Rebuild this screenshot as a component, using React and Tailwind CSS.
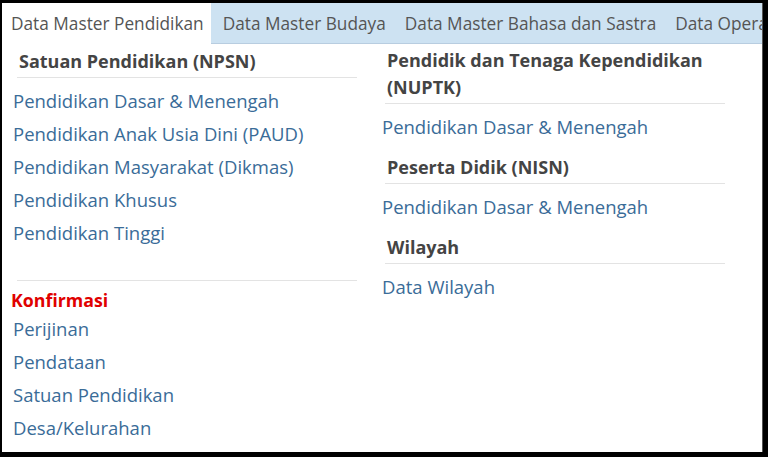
import React from "react";

const tabs = ["Data Master Pendidikan", "Data Master Budaya", "Data Master Bahasa dan Sastra", "Data Operator"];

const Heading = ({ children, className = "" }) => (
  <div className={`ml-[15px] w-[340px] border-b border-[#e3e3e3] pb-[2px] pl-[2px] text-[18px] font-bold leading-[27px] text-[#444] ${className}`}>
    {children}
  </div>
);

const Links = ({ items, className = "" }) => (
  <div className={`mt-[6px] ${className}`}>
    {items.map((t) => (
      <a key={t} href="#" className="block h-[33px] leading-[33px] text-[#3a6c98] whitespace-nowrap">
        {t}
      </a>
    ))}
  </div>
);

export default function App() {
  return (
    <div className="h-[457px] w-[768px] bg-black pb-[5px] pl-[2px] pr-[5px] pt-[3px]">
      <div
        className="flex h-full flex-col overflow-hidden border-r border-[#555] bg-white text-[18.5px]"
        style={{ fontFamily: '"Open Sans", "Noto Sans", sans-serif' }}
      >
        <div className="flex h-[41px] shrink-0 overflow-hidden whitespace-nowrap bg-[#cde2f2] text-[17.25px] text-[#555]">
          {tabs.map((t, i) => (
            <div
              key={t}
              className={
                i === 0
                  ? "flex shrink-0 items-center bg-white pl-[9px] pr-[7px] pt-[1px]"
                  : "flex shrink-0 items-center border-b border-[#b8cde0] pl-[12px] pr-[7px] pt-[1px]"
              }
            >
              {t}
            </div>
          ))}
        </div>

        <div className="flex">
          <div className="w-[368px] shrink-0 pt-[4px]">
            <Heading>Satuan Pendidikan (NPSN)</Heading>
            <Links
              className="ml-[11px]"
              items={[
                "Pendidikan Dasar & Menengah",
                "Pendidikan Anak Usia Dini (PAUD)",
                "Pendidikan Masyarakat (Dikmas)",
                "Pendidikan Khusus",
                "Pendidikan Tinggi",
              ]}
            />
            <div className="ml-[15px] mt-[31px] w-[340px] border-t border-[#e3e3e3]" />
            <div className="ml-[9px] mt-[7px] h-[24px] text-[17.75px] font-bold leading-[24px] text-[#e00000]">Konfirmasi</div>
            <div className="ml-[11px]">
              {["Perijinan", "Pendataan", "Satuan Pendidikan", "Desa/Kelurahan"].map((t) => (
                <a key={t} href="#" className="block h-[33px] leading-[33px] text-[#3a6c98]">
                  {t}
                </a>
              ))}
            </div>
          </div>

          <div className="flex-1 pt-[3px]">
            <Heading>
              Pendidik dan Tenaga Kependidikan
              <br />
              (NUPTK)
            </Heading>
            <Links className="ml-[12px]" items={["Pendidikan Dasar & Menengah"]} />
            <Heading className="mt-[11px]">Peserta Didik (NISN)</Heading>
            <Links className="ml-[12px]" items={["Pendidikan Dasar & Menengah"]} />
            <Heading className="mt-[11px]">Wilayah</Heading>
            <Links className="ml-[12px]" items={["Data Wilayah"]} />
          </div>
        </div>
      </div>
    </div>
  );
}
